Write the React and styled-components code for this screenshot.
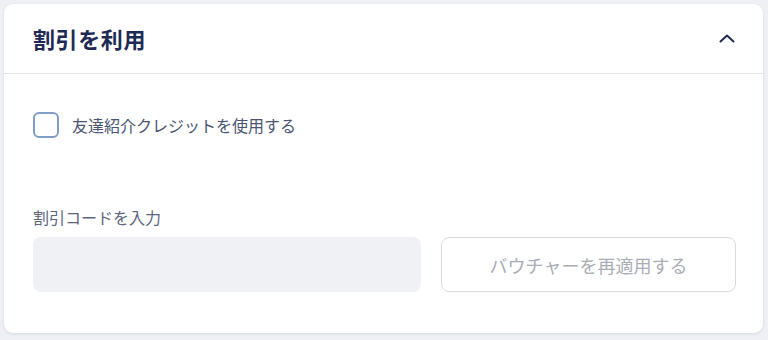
import styled, { createGlobalStyle } from "styled-components";

const GlobalStyle = createGlobalStyle`
	html, body {
		margin: 0;
		padding: 0;
		background: #eef0f5;
	}
	body {
		font-family: "Noto Sans CJK JP", "Noto Sans", sans-serif;
	}
`;

const ChevronUp = () => (
	<svg width="18" height="18" viewBox="0 0 18 18" fill="none">
		<path
			d="M2.5 12.5L9 6.5L15.5 12.5"
			stroke="#1e2a52"
			strokeWidth="2"
			strokeLinecap="round"
			strokeLinejoin="round"
		/>
	</svg>
);

function App() {
	return (
		<>
			<GlobalStyle />
			<Page>
				<Card>
					<Header>
						<Title>割引を利用</Title>
						<Toggle aria-label="閉じる">
							<ChevronUp />
						</Toggle>
					</Header>
					<Body>
						<CheckRow>
							<Checkbox type="checkbox" />
							<CheckLabel>友達紹介クレジットを使用する</CheckLabel>
						</CheckRow>
						<Field>
							<FieldLabel>割引コードを入力</FieldLabel>
							<FieldRow>
								<CodeInput />
								<ApplyButton disabled>バウチャーを再適用する</ApplyButton>
							</FieldRow>
						</Field>
					</Body>
				</Card>
			</Page>
		</>
	);
}

export default App;

const Page = styled.div`
	padding: 4px 5px 7px 4px;
`;

const Card = styled.div`
	background: #fff;
	border-radius: 9px;
	box-shadow: 0 1px 3px rgba(40, 50, 90, 0.12);
	height: 329px;
	box-sizing: border-box;
`;

const Header = styled.div`
	height: 70px;
	box-sizing: border-box;
	display: flex;
	align-items: center;
	justify-content: space-between;
	padding: 0 27px 2px 29px;
	border-bottom: 1px solid #e1e4ea;
`;

const Title = styled.h2`
	margin: 0;
	font-size: 22px;
	font-weight: 700;
	color: #1e2a55;
	letter-spacing: 0.6px;
`;

const Toggle = styled.button`
	border: none;
	background: none;
	padding: 0;
	display: flex;
	align-items: center;
	cursor: pointer;
`;

const Body = styled.div`
	padding: 38px 27px 0 29px;
`;

const CheckRow = styled.label`
	display: flex;
	align-items: center;
	gap: 13px;
`;

const Checkbox = styled.input`
	appearance: none;
	margin: 0;
	width: 26px;
	height: 26px;
	box-sizing: border-box;
	border: 2px solid #7f9dc6;
	border-radius: 6px;
	background: #fff;
`;

const CheckLabel = styled.span`
	font-size: 16px;
	color: #4b5573;
`;

const Field = styled.div`
	margin-top: 68px;
	display: flex;
	flex-direction: column;
	gap: 9px;
`;

const FieldLabel = styled.span`
	font-size: 16px;
	line-height: 22px;
	color: #5c657b;
`;

const FieldRow = styled.div`
	display: flex;
	gap: 20px;
`;

const CodeInput = styled.input`
	width: 388px;
	height: 55px;
	box-sizing: border-box;
	border: none;
	border-radius: 8px;
	background: #f0f1f4;
`;

const ApplyButton = styled.button`
	width: 295px;
	height: 55px;
	box-sizing: border-box;
	border: 1px solid #d9dde3;
	border-radius: 8px;
	background: #fff;
	font-family: "Noto Sans CJK JP", "Noto Sans", sans-serif;
	font-size: 18px;
	color: #a8acb4;
`;
